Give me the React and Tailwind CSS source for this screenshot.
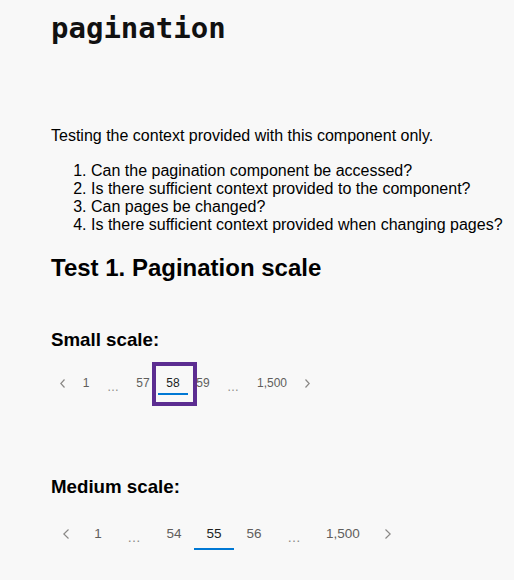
import React from 'react';

const Chevron = ({ dir = 'left', size = 'sm' }) => {
  const h = size === 'sm' ? 9 : 10;
  const w = size === 'sm' ? 5 : 6;
  const points = dir === 'left' ? `${w - 0.5},0.5 0.8,${h / 2} ${w - 0.5},${h - 0.5}` : `0.5,0.5 ${w - 0.8},${h / 2} 0.5,${h - 0.5}`;
  return (
    <svg width={w} height={h} viewBox={`0 0 ${w} ${h}`} fill="none">
      <polyline points={points} stroke="#8a8886" strokeWidth="1.2" />
    </svg>
  );
};

const smallItems = [
  { type: 'prev', w: 'w-[24px]' },
  { label: '1', w: 'w-[24px]' },
  { type: 'dots', w: 'w-[30px]' },
  { label: '57', w: 'w-[30px]' },
  { label: '58', w: 'w-[30px]', current: true, focused: true },
  { label: '59', w: 'w-[30px]' },
  { type: 'dots', w: 'w-[30px]' },
  { label: '1,500', w: 'w-[48px]' },
  { type: 'next', w: 'w-[22px]' },
];

const mediumItems = [
  { type: 'prev', w: 'w-[32px]' },
  { label: '1', w: 'w-[32px]' },
  { type: 'dots', w: 'w-[40px]' },
  { label: '54', w: 'w-[40px]' },
  { label: '55', w: 'w-[40px]', current: true },
  { label: '56', w: 'w-[40px]' },
  { type: 'dots', w: 'w-[40px]' },
  { label: '1,500', w: 'w-[58px]' },
  { type: 'next', w: 'w-[32px]' },
];

const Pagination = ({ items, size }) => {
  const text = size === 'sm' ? 'text-[12px]' : 'text-[13.5px]';
  return (
    <nav className={`flex items-stretch h-[32px] ml-[-1px] ${text}`}>
      {items.map((item, i) => {
        if (item.type === 'prev' || item.type === 'next') {
          return (
            <div key={i} className={`${item.w} flex items-center justify-center`}>
              <Chevron dir={item.type === 'prev' ? 'left' : 'right'} size={size} />
            </div>
          );
        }
        if (item.type === 'dots') {
          return (
            <div key={i} className={`${item.w} flex items-center justify-center text-[#8a8886] pt-[8px]`}>
              …
            </div>
          );
        }
        return (
          <div
            key={i}
            className={`${item.w} relative flex items-center justify-center ${item.current ? 'text-[#201f1e]' : 'text-[#605e5c]'}`}
          >
            {item.label}
            {item.current && (
              <div
                className={`absolute left-0 right-0 h-[2px] bg-[#0078d4] ${size === 'sm' ? 'top-[26px]' : 'bottom-0'}`}
              />
            )}
            {item.focused && (
              <div className="absolute -left-[6px] -right-[9px] -top-[5px] -bottom-[7px] border-[4px] border-[#5c2d91]" />
            )}
          </div>
        );
      })}
    </nav>
  );
};

export default function App() {
  return (
    <div className="min-h-[580px] bg-[#f8f8f8] text-black pl-[51px] pt-[11px] font-['Liberation_Sans',Arial,sans-serif]">
      <h1 className="font-['DejaVu_Sans_Mono',monospace] font-bold text-[29px] leading-[34px] text-[#111]">
        pagination
      </h1>

      <p className="mt-[82px] text-[16px] leading-[18px]">Testing the context provided with this component only.</p>

      <ol className="mt-[17px] pl-10 list-decimal text-[16px] leading-[18px]">
        <li>Can the pagination component be accessed?</li>
        <li>Is there sufficient context provided to the component?</li>
        <li>Can pages be changed?</li>
        <li>Is there sufficient context provided when changing pages?</li>
      </ol>

      <h2 className="mt-[20px] text-[24px] leading-[28px] font-bold">Test 1. Pagination scale</h2>

      <h3 className="mt-[47px] text-[18.72px] leading-[22px] font-bold">Small scale:</h3>
      <div className="mt-[16px]">
        <Pagination items={smallItems} size="sm" />
      </div>

      <h3 className="mt-[77px] text-[18.72px] leading-[22px] font-bold">Medium scale:</h3>
      <div className="mt-[20px]">
        <Pagination items={mediumItems} size="md" />
      </div>
    </div>
  );
}
